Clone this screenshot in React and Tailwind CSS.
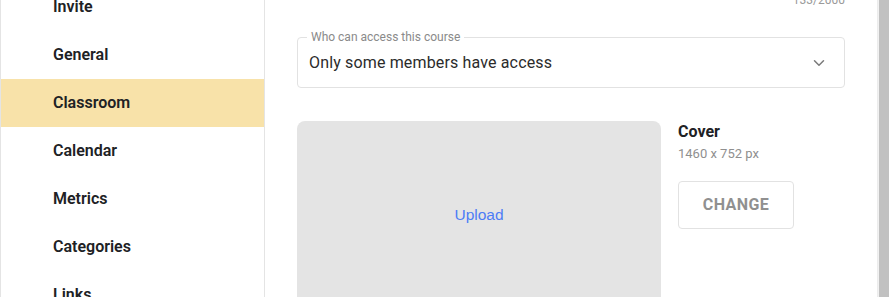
import { useState } from 'react'

const navItems = ['Invite', 'General', 'Classroom', 'Calendar', 'Metrics', 'Categories', 'Links']

function Sidebar({ active }) {
  return (
    <div className="w-[265px] shrink-0 border-l border-r border-[#e4e4e4] bg-white overflow-hidden">
      <div className="mt-[-17px]">
        {navItems.map((item) => (
          <div
            key={item}
            className={`h-12 flex items-center pl-[52px] text-[16px] font-semibold text-[#202124] ${
              item === active ? 'bg-[#f8e2a9]' : ''
            }`}
          >
            {item}
          </div>
        ))}
      </div>
    </div>
  )
}

function AccessSelect() {
  return (
    <div className="relative h-[51px] border border-[#e2e2e2] rounded flex items-center justify-between pl-[11px] pr-4">
      <span className="absolute -top-[9px] left-[9px] bg-white px-[4px] text-[12px] leading-4 text-[#8a8a8a]">
        Who can access this course
      </span>
      <span className="text-[16px] tracking-[0.15px] text-[#2b2b2b]">Only some members have access</span>
      <svg className="w-[18px] h-[18px] text-[#7a7a7a]" fill="none" stroke="currentColor" viewBox="0 0 24 24">
        <path strokeLinecap="round" strokeLinejoin="round" strokeWidth={2} d="M6 9l6 6 6-6" />
      </svg>
    </div>
  )
}

export default function App() {
  const [active] = useState('Classroom')

  return (
    <div className="w-[889px] h-[297px] flex overflow-hidden bg-white font-['Roboto',sans-serif]">
      <Sidebar active={active} />
      <div className="flex-1 min-w-0 border-r border-[#ececec] pl-8 pr-[32px]">
        <div className="mt-[-8px] h-4 text-right text-[12px] leading-4 text-[#9a9a9a]">133/2000</div>
        <div className="mt-[29px]">
          <AccessSelect />
        </div>
        <div className="mt-[33px] flex gap-[17px]">
          <div className="w-[364px] h-[188px] shrink-0 rounded-lg bg-[#e4e4e4] flex items-center justify-center">
            <span className="text-[15.5px] text-[#4d7cf6] font-['Liberation_Sans',sans-serif]">Upload</span>
          </div>
          <div className="pt-[1px]">
            <div className="text-[16px] font-bold leading-5 text-[#202124]">Cover</div>
            <div className="mt-[2px] text-[13px] leading-5 text-[#8f8f8f]">1460 x 752 px</div>
            <button className="mt-[17px] w-[116px] h-[48px] border border-[#e2e2e2] rounded text-[16px] font-bold tracking-wide text-[#909090] bg-white">
              CHANGE
            </button>
          </div>
        </div>
      </div>
      <div className="w-[11px] shrink-0 bg-[#f1f1f1] flex justify-end">
        <div className="w-[10px] h-full bg-[#c1c1c1]" />
      </div>
    </div>
  )
}
